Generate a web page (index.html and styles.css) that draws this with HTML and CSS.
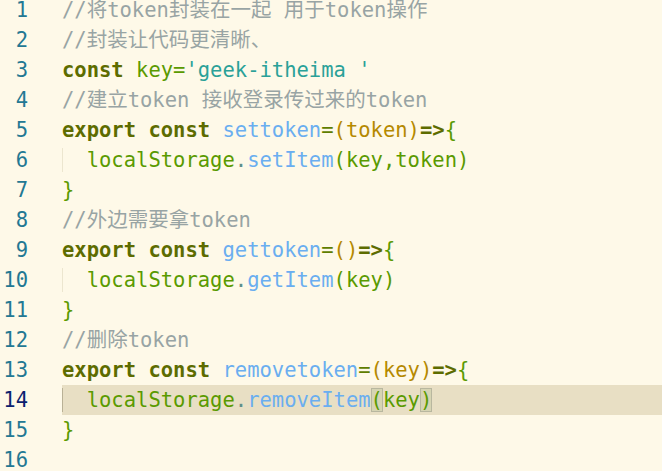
FILE: index.html
```html
<!DOCTYPE html>
<html lang="zh-CN">
<head>
  <meta charset="UTF-8" />
  <title>token.js</title>
  <link rel="stylesheet" href="styles.css">
</head>
<body>
  <div class="editor">
    <div class="line"><span class="ln">1</span><span class="code"><span class="cm">//将token封装在一起 用于token操作</span></span></div>
    <div class="line"><span class="ln">2</span><span class="code"><span class="cm">//封装让代码更清晰、</span></span></div>
    <div class="line"><span class="ln">3</span><span class="code"><span class="kw">const</span> <span class="var">key=</span><span class="str">'geek-itheima '</span></span></div>
    <div class="line"><span class="ln">4</span><span class="code"><span class="cm">//建立token 接收登录传过来的token</span></span></div>
    <div class="line"><span class="ln">5</span><span class="code"><span class="kw">export const</span> <span class="fn">settoken</span><span class="op">=</span><span class="param">(token)</span><span class="arrow">=&gt;</span><span class="var">{</span></span></div>
    <div class="line"><span class="ln">6</span><span class="code"><span class="guide">  </span><span class="var">localStorage</span><span class="dot">.</span><span class="fn">setItem</span><span class="var">(key,token)</span></span></div>
    <div class="line"><span class="ln">7</span><span class="code"><span class="var">}</span></span></div>
    <div class="line"><span class="ln">8</span><span class="code"><span class="cm">//外边需要拿token</span></span></div>
    <div class="line"><span class="ln">9</span><span class="code"><span class="kw">export const</span> <span class="fn">gettoken</span><span class="op">=</span><span class="param">()</span><span class="arrow">=&gt;</span><span class="var">{</span></span></div>
    <div class="line"><span class="ln">10</span><span class="code"><span class="guide">  </span><span class="var">localStorage</span><span class="dot">.</span><span class="fn">getItem</span><span class="var">(key)</span></span></div>
    <div class="line"><span class="ln">11</span><span class="code"><span class="var">}</span></span></div>
    <div class="line"><span class="ln">12</span><span class="code"><span class="cm">//删除token</span></span></div>
    <div class="line"><span class="ln">13</span><span class="code"><span class="kw">export const</span> <span class="fn">removetoken</span><span class="op">=</span><span class="param">(key)</span><span class="arrow">=&gt;</span><span class="var">{</span></span></div>
    <div class="line current"><span class="ln">14</span><span class="code"><span class="guide active">  </span><span class="var">localStorage</span><span class="dot">.</span><span class="fn">removeItem</span><span class="var match">(</span><span class="var">key</span><span class="var match">)</span></span></div>
    <div class="line"><span class="ln">15</span><span class="code"><span class="var">}</span></span></div>
    <div class="line"><span class="ln">16</span><span class="code"></span></div>
  </div>
</body>
</html>
```

FILE: styles.css
```css
body {
  margin: 0;
  background: #fef9e8;
  overflow: hidden;
}

.editor {
  margin-top: -5px;
  font-family: "DejaVu Sans Mono", "Noto Sans CJK SC", monospace;
  font-size: 20.5px;
  color: #4f9a00;
}

.line {
  display: flex;
  height: 30px;
  line-height: 30px;
  white-space: pre;
}

.ln {
  width: 28px;
  text-align: right;
  color: #237893;
  flex-shrink: 0;
}

.code {
  margin-left: 34px;
  flex: 1;
}

.current .code {
  background: #e8dfc4;
}

.current .ln {
  color: #0b216f;
}

.guide {
  box-shadow: inset 1px 0 0 #ece6cf;
}

.guide.active {
  box-shadow: inset 1px 0 0 #b9b196;
}

.cm {
  color: #98a4a4;
}

.kw {
  color: #5d6c00;
  font-weight: bold;
}

.var {
  color: #5a9a00;
}

.str {
  color: #2aa198;
}

.fn {
  color: #6aaef0;
}

.op {
  color: #5f7d00;
}

.param {
  color: #b58900;
}

.arrow {
  color: #5d6c00;
  font-weight: bold;
}

.dot {
  color: #5f8f8a;
}

.match {
  background: #d6d4b3;
  box-shadow: inset 0 0 0 1px #b8b79f;
}
```
